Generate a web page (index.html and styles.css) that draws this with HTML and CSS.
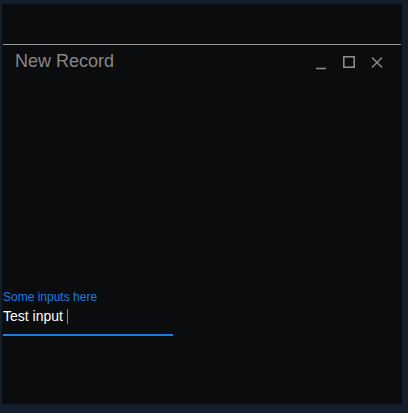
FILE: index.html
```html
<!DOCTYPE html>
<html>
<head>
<meta charset="utf-8">
<link rel="stylesheet" href="styles.css">
</head>
<body>
<div class="panel">
  <div class="top-space"></div>
  <div class="divider"></div>
  <div class="titlebar">
    <span class="title">New Record</span>
    <div class="controls">
      <svg class="ctl" width="14" height="16" viewBox="0 0 14 16"><path d="M2 14.5h10" stroke="#8a8a8a" stroke-width="1.6" fill="none"/></svg>
      <svg class="ctl" width="14" height="16" viewBox="0 0 14 16"><rect x="1.8" y="2.8" width="10.4" height="10.4" stroke="#8a8a8a" stroke-width="1.6" fill="none"/></svg>
      <svg class="ctl" width="14" height="16" viewBox="0 0 14 16"><path d="M2 3.5l10 10M12 3.5l-10 10" stroke="#8a8a8a" stroke-width="1.5" fill="none"/></svg>
    </div>
  </div>
  <div class="body">
    <div class="field">
      <label class="label">Some inputs here</label>
      <div class="input"><span class="value">Test input</span><span class="caret"></span></div>
    </div>
  </div>
</div>
</body>
</html>
```
FILE: styles.css
```css
html, body {
  margin: 0;
  padding: 0;
  background: #131d2b;
  width: 408px;
  height: 413px;
  overflow: hidden;
  font-family: "Liberation Sans", Arial, sans-serif;
}
body {
  padding: 4px 0 0 2px;
  box-sizing: border-box;
}
.panel {
  width: 400px;
  height: 400px;
  background: #0b0c0e;
  display: flex;
  flex-direction: column;
  padding: 0 1px;
  box-sizing: border-box;
}
.top-space {
  height: 40px;
}
.divider {
  height: 1px;
  background: #9a9a9a;
}
.titlebar {
  display: flex;
  align-items: flex-start;
  justify-content: space-between;
  padding: 6px 0 0 12px;
  height: 30px;
  box-sizing: border-box;
}
.title {
  font-size: 18px;
  line-height: 21px;
  color: #878787;
}
.controls {
  display: flex;
  gap: 14px;
  padding-top: 3px;
  padding-right: 17px;
}
.ctl {
  display: block;
}
.body {
  flex: 1;
  padding-top: 215px;
}
.field {
  width: 170px;
  border-bottom: 2px solid #1a7be0;
  padding-bottom: 10px;
}
.label {
  display: block;
  font-size: 12px;
  line-height: 14px;
  color: #1a7be0;
}
.input {
  display: flex;
  align-items: center;
  margin-top: 4px;
  height: 16px;
}
.value {
  font-size: 14px;
  line-height: 16px;
  color: #ffffff;
}
.caret {
  width: 1px;
  height: 15px;
  background: #8a8a8a;
  margin-left: 4px;
}
```
